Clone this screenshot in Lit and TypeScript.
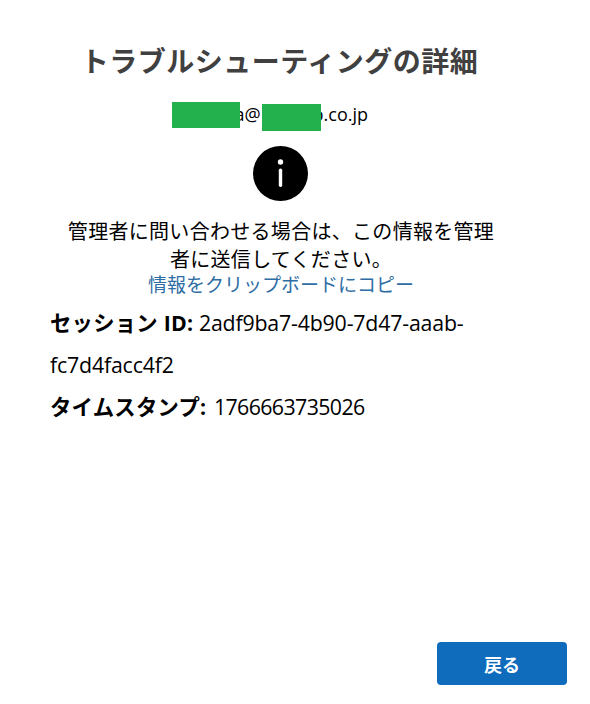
import { LitElement, html, css } from "lit";
import { customElement } from "lit/decorators.js";

@customElement("app-root")
export class AppRoot extends LitElement {
  static styles = css`
    :host {
      display: block;
      width: 590px;
      height: 704px;
      background: #fff;
      font-family: "Open Sans", "Noto Sans CJK JP", sans-serif;
      color: #000;
    }
    .page {
      box-sizing: border-box;
      height: 704px;
      display: flex;
      flex-direction: column;
      padding: 40px 23px 19px 50px;
    }
    h1 {
      margin: 0;
      font-size: 28px;
      line-height: 42px;
      font-weight: 700;
      letter-spacing: 0.5px;
      color: #404040;
      text-align: center;
      padding-right: 58px;
    }
    .email {
      position: relative;
      margin-top: 20px;
      align-self: flex-start;
      margin-left: 122px;
      font-size: 18px;
      line-height: 24px;
      width: 196px;
      white-space: nowrap;
      text-align: right;
    }
    .hidden {
      display: inline-block;
      width: 52px;
    }
    .mask {
      position: absolute;
      background: #22b14c;
    }
    .m1 { left: 0; top: 0; width: 68px; height: 26px; }
    .m2 { left: 90px; top: 2px; width: 59px; height: 27px; }
    .icon {
      display: block;
      margin: 20px 0 0 203px;
      width: 55px;
      height: 55px;
    }
    .msg {
      margin: 17px 0 0;
      width: 462px;
      box-sizing: border-box;
      padding: 0 14px;
      font-size: 20px;
      letter-spacing: 0.3px;
      line-height: 28px;
      text-align: center;
    }
    .copy {
      width: 462px;
      text-align: center;
      font-size: 19px;
      line-height: 24px;
      color: #2e6da4;
      margin-top: -1px;
    }
    .row {
      width: 440px;
      font-size: 21.33px;
      line-height: 42px;
      margin: 0;
    }
    .r1 { margin-top: 5px; }
    .id { letter-spacing: -0.18px; }
    .ts { letter-spacing: -0.6px; margin-left: 2px; }
    b { font-weight: 700; letter-spacing: 0.25px; }
    .spacer { flex: 1; }
    .btn {
      align-self: flex-end;
      width: 130px;
      height: 43px;
      border: none;
      border-radius: 4px;
      background: #0f6cbd;
      color: #fff;
      font: 700 18px "Open Sans", "Noto Sans CJK JP", sans-serif;
    }
  `;

  render() {
    return html`
      <div class="page">
        <h1>トラブルシューティングの詳細</h1>
        <div class="email">a@<span class="hidden"></span>p.co.jp<span class="mask m1"></span><span class="mask m2"></span></div>
        <svg class="icon" viewBox="0 0 55 55" aria-hidden="true">
          <circle cx="27.5" cy="27.5" r="27.5" fill="#000"></circle>
          <circle cx="27.5" cy="16" r="2.7" fill="#fff"></circle>
          <rect x="25.8" y="22.5" width="3.4" height="18.5" rx="1.7" fill="#fff"></rect>
        </svg>
        <div class="msg">管理者に問い合わせる場合は、この情報を管理者に送信してください。</div>
        <div class="copy">情報をクリップボードにコピー</div>
        <p class="row r1"><b>セッション ID:</b> <span class="id">2adf9ba7-4b90-7d47-aaab-fc7d4facc4f2</span></p>
        <p class="row"><b>タイムスタンプ:</b> <span class="ts">1766663735026</span></p>
        <div class="spacer"></div>
        <button class="btn">戻る</button>
      </div>
    `;
  }
}
